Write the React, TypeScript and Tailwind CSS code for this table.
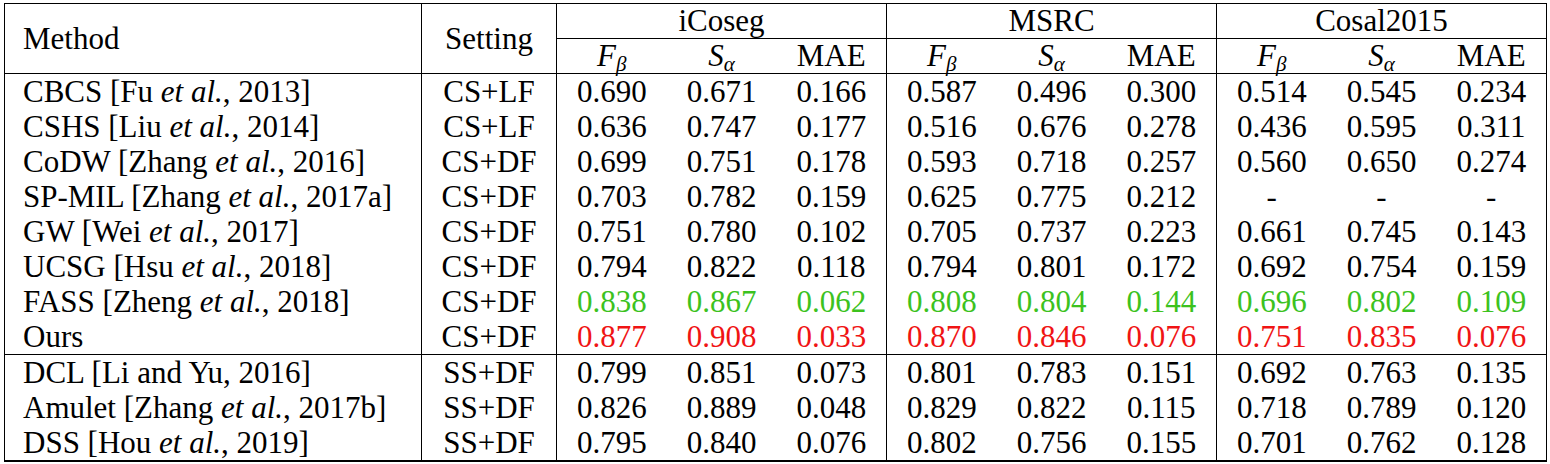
import type { ReactNode } from 'react';

type Row = {
  method: ReactNode;
  setting: string;
  values: string[];
  color?: 'green' | 'red';
};

const EtAl = () => <i>et al.</i>;

const topRows: Row[] = [
  { method: <>CBCS [Fu <EtAl />, 2013]</>, setting: 'CS+LF', values: ['0.690', '0.671', '0.166', '0.587', '0.496', '0.300', '0.514', '0.545', '0.234'] },
  { method: <>CSHS [Liu <EtAl />, 2014]</>, setting: 'CS+LF', values: ['0.636', '0.747', '0.177', '0.516', '0.676', '0.278', '0.436', '0.595', '0.311'] },
  { method: <>CoDW [Zhang <EtAl />, 2016]</>, setting: 'CS+DF', values: ['0.699', '0.751', '0.178', '0.593', '0.718', '0.257', '0.560', '0.650', '0.274'] },
  { method: <>SP-MIL [Zhang <EtAl />, 2017a]</>, setting: 'CS+DF', values: ['0.703', '0.782', '0.159', '0.625', '0.775', '0.212', '-', '-', '-'] },
  { method: <>GW [Wei <EtAl />, 2017]</>, setting: 'CS+DF', values: ['0.751', '0.780', '0.102', '0.705', '0.737', '0.223', '0.661', '0.745', '0.143'] },
  { method: <>UCSG [Hsu <EtAl />, 2018]</>, setting: 'CS+DF', values: ['0.794', '0.822', '0.118', '0.794', '0.801', '0.172', '0.692', '0.754', '0.159'] },
  { method: <>FASS [Zheng <EtAl />, 2018]</>, setting: 'CS+DF', color: 'green', values: ['0.838', '0.867', '0.062', '0.808', '0.804', '0.144', '0.696', '0.802', '0.109'] },
  { method: <>Ours</>, setting: 'CS+DF', color: 'red', values: ['0.877', '0.908', '0.033', '0.870', '0.846', '0.076', '0.751', '0.835', '0.076'] },
];

const bottomRows: Row[] = [
  { method: <>DCL [Li and Yu, 2016]</>, setting: 'SS+DF', values: ['0.799', '0.851', '0.073', '0.801', '0.783', '0.151', '0.692', '0.763', '0.135'] },
  { method: <>Amulet [Zhang <EtAl />, 2017b]</>, setting: 'SS+DF', values: ['0.826', '0.889', '0.048', '0.829', '0.822', '0.115', '0.718', '0.789', '0.120'] },
  { method: <>DSS [Hou <EtAl />, 2019]</>, setting: 'SS+DF', values: ['0.795', '0.840', '0.076', '0.802', '0.756', '0.155', '0.701', '0.762', '0.128'] },
];

const datasets = ['iCoseg', 'MSRC', 'Cosal2015'];

function Metric({ kind }: { kind: number }) {
  if (kind === 0)
    return (
      <span className="italic">
        F<sub className="text-[21px] italic">β</sub>
      </span>
    );
  if (kind === 1)
    return (
      <span className="italic">
        S<sub className="text-[21px] italic">α</sub>
      </span>
    );
  return <span>MAE</span>;
}

function DataRow({ row }: { row: Row }) {
  const color =
    row.color === 'green' ? 'text-[#3cc21e]' : row.color === 'red' ? 'text-[#f01414]' : 'text-black';
  return (
    <tr className="h-[35px] leading-[35px]">
      <td className="border-r border-black pl-[18px] text-left whitespace-nowrap">{row.method}</td>
      <td className="border-r border-black text-center">{row.setting}</td>
      {row.values.map((v, i) => (
        <td key={i} className={`text-center ${color} ${i % 3 === 2 && i < 8 ? 'border-r border-black' : ''}`}>
          {v}
        </td>
      ))}
    </tr>
  );
}

export default function App() {
  return (
    <div className="w-[1550px] h-[464px] bg-white pl-[4px] pt-[3px] font-['Liberation_Serif','Times_New_Roman',serif]">
      <table className="table-fixed border-collapse border border-b-2 border-black text-[31px] text-black font-['Liberation_Serif','Times_New_Roman',serif]">
        <colgroup>
          <col className="w-[417px]" />
          <col className="w-[135px]" />
          {Array.from({ length: 9 }).map((_, i) => (
            <col key={i} className="w-[110px]" />
          ))}
        </colgroup>
        <thead>
          <tr className="h-[34px] leading-[34px]">
            <th rowSpan={2} className="border-r border-b border-black pl-[18px] text-left font-normal">
              Method
            </th>
            <th rowSpan={2} className="border-r border-b border-black text-center font-normal">
              Setting
            </th>
            {datasets.map((d) => (
              <th key={d} colSpan={3} className="border-r border-b border-black text-center font-normal">
                {d}
              </th>
            ))}
          </tr>
          <tr className="h-[35px] leading-[30px]">
            {Array.from({ length: 9 }).map((_, i) => (
              <th
                key={i}
                className={`border-b border-black text-center font-normal ${i % 3 === 2 && i < 8 ? 'border-r' : ''}`}
              >
                <Metric kind={i % 3} />
              </th>
            ))}
          </tr>
        </thead>
        <tbody>
          {topRows.map((r, i) => (
            <DataRow key={i} row={r} />
          ))}
        </tbody>
        <tbody className="border-t border-black">
          {bottomRows.map((r, i) => (
            <DataRow key={i} row={r} />
          ))}
        </tbody>
      </table>
    </div>
  );
}
